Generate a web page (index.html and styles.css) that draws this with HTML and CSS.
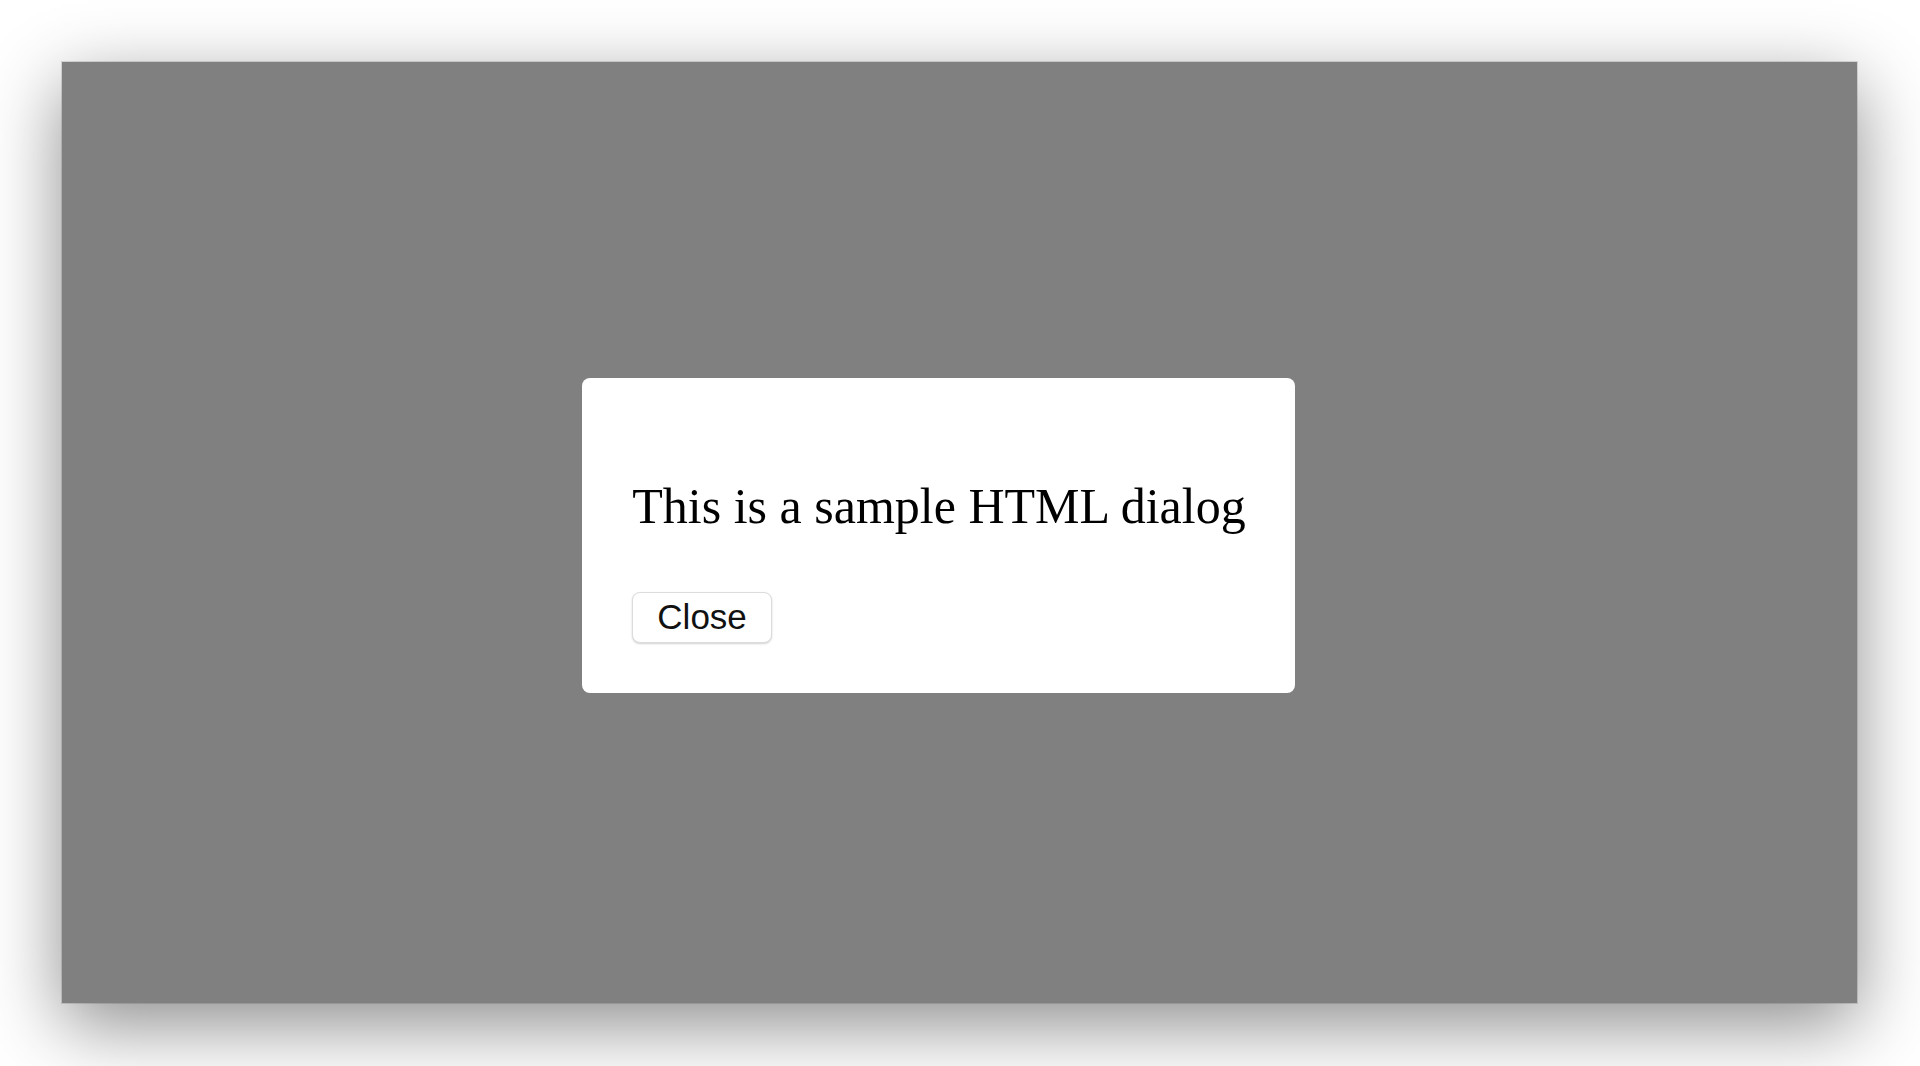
FILE: index.html
```html
<!DOCTYPE html>
<html>
<head>
	<title>Dialog</title>
	<meta charset="utf-8">
	<link rel="stylesheet" href="styles.css">
</head>
<body>
	<div class="window">
		<div class="backdrop">
			<div class="dialog">
				<p class="msg">This is a sample HTML dialog</p>
				<button class="btn" type="button">Close</button>
			</div>
		</div>
	</div>
</body>
</html>
```

FILE: styles.css
```css
html,body{margin:0;padding:0;}
body{background:#fff;width:1920px;height:1066px;overflow:hidden;}
.window{margin:62px 0 0 62px;width:1795px;height:941px;box-shadow:0 22px 70px rgba(0,0,0,.45),0 0 0 1px rgba(0,0,0,.12);}
.backdrop{width:100%;height:100%;background:#808080;display:flex;align-items:center;justify-content:center;padding-right:42px;padding-top:5px;box-sizing:border-box;}
.dialog{background:#fff;border-radius:8px;padding:50px 49px 50px 50px;display:flex;flex-direction:column;align-items:flex-start;}
.msg{margin:50px 0 57px;font:50px/57px "Liberation Serif","Times New Roman",serif;color:#000;white-space:nowrap;}
.btn{height:51px;padding:0 24px;font:35px "Liberation Sans",Arial,sans-serif;color:#111;background:#fff;border:1px solid #dcdcdc;border-radius:8px;box-shadow:0 1px 2px rgba(0,0,0,.18);}
```
